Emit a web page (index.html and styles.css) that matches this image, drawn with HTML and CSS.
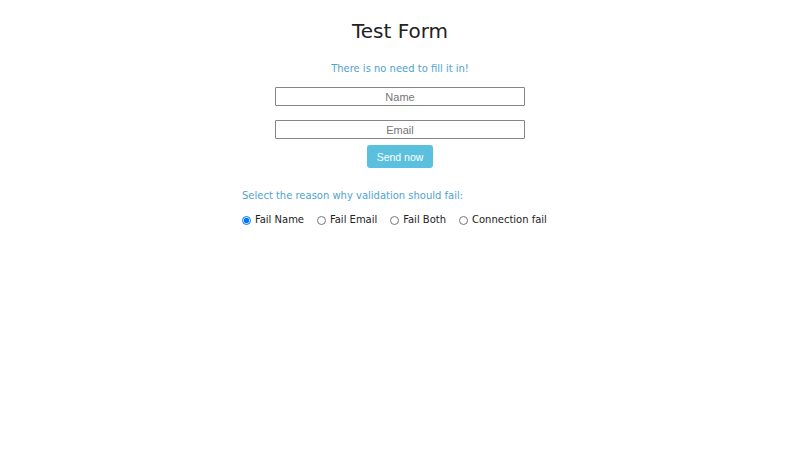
FILE: index.html
```html
<!DOCTYPE html>
<html>
<head>
<meta charset="utf-8">
<link rel="stylesheet" href="styles.css">
</head>
<body>
<div class="page">
  <h1 class="title">Test Form</h1>
  <p class="lead">There is no need to fill it in!</p>
  <form class="form">
    <input class="field field-name" type="text" placeholder="Name">
    <input class="field field-email" type="text" placeholder="Email">
    <button class="send" type="button">Send now</button>
  </form>
  <div class="reasons">
    <p class="reason-label">Select the reason why validation should fail:</p>
    <div class="options">
      <label class="opt"><input type="radio" name="r" checked> Fail Name</label>
      <label class="opt"><input type="radio" name="r"> Fail Email</label>
      <label class="opt"><input type="radio" name="r"> Fail Both</label>
      <label class="opt"><input type="radio" name="r"> Connection fail</label>
    </div>
  </div>
</div>
</body>
</html>
```

FILE: styles.css
```css
html, body {
  margin: 0;
  padding: 0;
  background: #fff;
}
body {
  font-family: "DejaVu Sans", sans-serif;
  color: #222;
}
.page {
  display: flex;
  flex-direction: column;
  align-items: center;
  padding-top: 19px;
}
.title {
  margin: 0;
  font-size: 20px;
  font-weight: normal;
  line-height: 24px;
  color: #222;
}
.lead,
.reason-label,
.opt {
  font-family: "DejaVu Sans Condensed", "DejaVu Sans", sans-serif;
  font-stretch: condensed;
  font-size: 11.1px;
  line-height: 12px;
}
.lead {
  margin: 20px 0 0;
  color: #4fa3d1;
}
.form {
  display: flex;
  flex-direction: column;
  align-items: center;
  margin-top: 12px;
}
.field {
  box-sizing: border-box;
  width: 250px;
  height: 19px;
  padding: 0 4px;
  border: 1px solid #858585;
  border-radius: 1px;
  font-family: "Liberation Sans", Arial, sans-serif;
  font-size: 11px;
  text-align: center;
  color: #333;
}
.field::placeholder {
  color: #757575;
}
.field-name {
  margin: 0 0 14px;
}
.field-email {
  margin: 0 0 6px;
}
.send {
  width: 66px;
  height: 23px;
  border: none;
  border-radius: 3px;
  background: #5bc0de;
  color: #fff;
  font-family: "Liberation Sans", Arial, sans-serif;
  font-size: 10.5px;
  padding: 0;
}
.reasons {
  width: 316px;
  margin-top: 22px;
}
.reason-label {
  margin: 0;
  color: #4fa3d1;
  white-space: nowrap;
}
.options {
  display: flex;
  gap: 13px;
  margin-top: 12px;
  white-space: nowrap;
}
.opt {
  display: flex;
  align-items: center;
  color: #222;
}
.opt input {
  margin: 0 4px 0 0;
  width: 9px;
  height: 9px;
}
```
